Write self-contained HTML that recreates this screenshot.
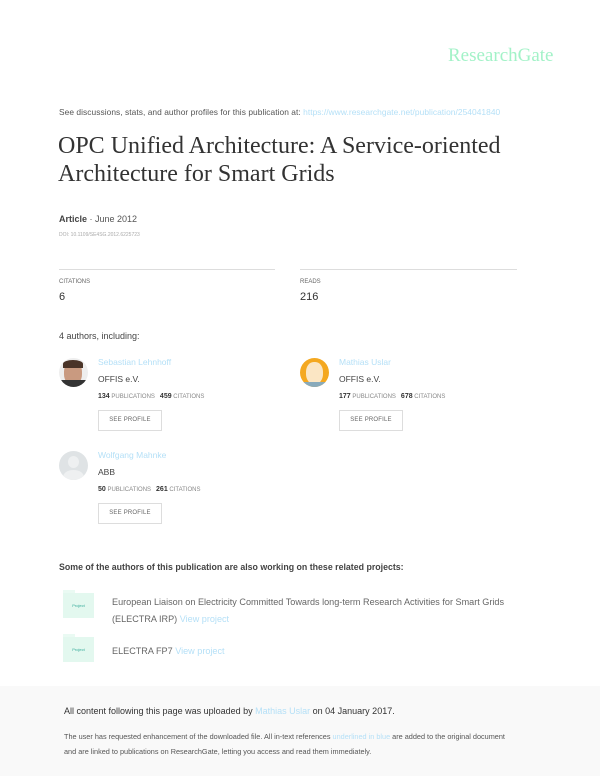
<!DOCTYPE html>
<html><head><style>
body{margin:0;width:600px;height:776px;background:#fff;position:relative;font-family:"Liberation Sans",sans-serif;color:#333;overflow:hidden}
.a{position:absolute;white-space:nowrap;line-height:1}
.s{font-family:"Liberation Serif",serif}
.bl{color:#b5e0f7}
.btn{position:absolute;width:62px;height:19px;border:1px solid #ddd;font-size:6px;color:#666;text-align:center;line-height:19px;letter-spacing:.2px}
.av{position:absolute;width:29px;height:29px;border-radius:50%;overflow:hidden}
.st{font-size:6px;color:#888}
.st b{color:#333;font-size:7px}
.pj{position:absolute;width:31px;height:25px;background:#e3f8ef;font-size:4px;color:#3a9;text-align:center;line-height:25px}
.pj:before{content:"";position:absolute;left:0;top:-3px;width:12px;height:3px;background:#eafaf3}
</style></head><body>
<div class="a s" style="left:448px;top:46px;font-size:19px;color:#a3f2c8">ResearchGate</div>
<div class="a" style="left:59px;top:108px;font-size:8.4px;color:#555;letter-spacing:.05px">See discussions, stats, and author profiles for this publication at: <span class="bl">https://www.researchgate.net/publication/254041840</span></div>
<div class="a s" style="left:58px;top:132px;font-size:24px;color:#333;line-height:28px">OPC Unified Architecture: A Service-oriented<br>Architecture for Smart Grids</div>
<div class="a" style="left:59px;top:215px;font-size:9px;color:#555"><b style="color:#444">Article</b> · June 2012</div>
<div class="a" style="left:59px;top:233px;font-size:5px;color:#aaa">DOI: 10.1109/SE4SG.2012.6225723</div>
<div class="a" style="left:59px;top:269px;width:216px;border-top:1px solid #ddd"></div>
<div class="a" style="left:300px;top:269px;width:217px;border-top:1px solid #ddd"></div>
<div class="a" style="left:59px;top:279px;font-size:6px;color:#666">CITATIONS</div>
<div class="a" style="left:59px;top:292px;font-size:11px;color:#333">6</div>
<div class="a" style="left:300px;top:279px;font-size:6px;color:#666">READS</div>
<div class="a" style="left:300px;top:292px;font-size:11px;color:#333">216</div>
<div class="a" style="left:59px;top:332px;font-size:9px;color:#444">4 authors, including:</div>

<div class="av" style="left:59px;top:358px;background:#eee"><div style="position:absolute;left:5px;top:3px;width:18px;height:24px;border-radius:45%;background:#c99a80"></div><div style="position:absolute;left:4px;top:2px;width:20px;height:8px;border-radius:50% 50% 0 0;background:#4a3428"></div><div style="position:absolute;left:0;top:22px;width:29px;height:10px;background:#333"></div></div>
<div class="a bl" style="left:98px;top:358px;font-size:8.5px">Sebastian Lehnhoff</div>
<div class="a" style="left:98px;top:375px;font-size:8.5px;color:#444">OFFIS e.V.</div>
<div class="a st" style="left:98px;top:393px"><b>134</b> PUBLICATIONS &nbsp; <b>459</b> CITATIONS</div>
<div class="btn" style="left:98px;top:410px">SEE PROFILE</div>

<div class="av" style="left:300px;top:358px;background:#f4a820"><div style="position:absolute;left:6px;top:4px;width:17px;height:22px;border-radius:45%;background:#fbe6c4"></div><div style="position:absolute;left:0;top:24px;width:29px;height:8px;background:#8ab"></div></div>
<div class="a bl" style="left:339px;top:358px;font-size:8.5px">Mathias Uslar</div>
<div class="a" style="left:339px;top:375px;font-size:8.5px;color:#444">OFFIS e.V.</div>
<div class="a st" style="left:339px;top:393px"><b>177</b> PUBLICATIONS &nbsp; <b>678</b> CITATIONS</div>
<div class="btn" style="left:339px;top:410px">SEE PROFILE</div>

<div class="av" style="left:59px;top:451px;background:#dfe3e5"><div style="position:absolute;left:9px;top:5px;width:11px;height:12px;border-radius:50%;background:#eef0f1"></div><div style="position:absolute;left:4px;top:19px;width:21px;height:14px;border-radius:50% 50% 0 0;background:#eef0f1"></div></div>
<div class="a bl" style="left:98px;top:451px;font-size:8.5px">Wolfgang Mahnke</div>
<div class="a" style="left:98px;top:468px;font-size:8.5px;color:#444">ABB</div>
<div class="a st" style="left:98px;top:486px"><b>50</b> PUBLICATIONS &nbsp; <b>261</b> CITATIONS</div>
<div class="btn" style="left:98px;top:503px">SEE PROFILE</div>

<div class="a" style="left:59px;top:563px;font-size:8.8px;color:#444;font-weight:bold">Some of the authors of this publication are also working on these related projects:</div>
<div class="pj" style="left:63px;top:593px">Project</div>
<div class="a" style="left:112px;top:594px;font-size:9.1px;color:#666;line-height:16.5px">European Liaison on Electricity Committed Towards long-term Research Activities for Smart Grids<br>(ELECTRA IRP) <span class="bl">View project</span></div>
<div class="pj" style="left:63px;top:637px">Project</div>
<div class="a" style="left:112px;top:647px;font-size:9.1px;color:#666">ELECTRA FP7 <span class="bl">View project</span></div>

<div class="a" style="left:0;top:686px;width:600px;height:90px;background:#f9f9f9"></div>
<div class="a" style="left:64px;top:707px;font-size:9px;color:#333">All content following this page was uploaded by <span class="bl">Mathias Uslar</span> on 04 January 2017.</div>
<div class="a" style="left:64px;top:730px;font-size:7.3px;color:#555;line-height:14.5px">The user has requested enhancement of the downloaded file. All in-text references <span class="bl">underlined in blue</span> are added to the original document<br>and are linked to publications on ResearchGate, letting you access and read them immediately.</div>
</body></html>
